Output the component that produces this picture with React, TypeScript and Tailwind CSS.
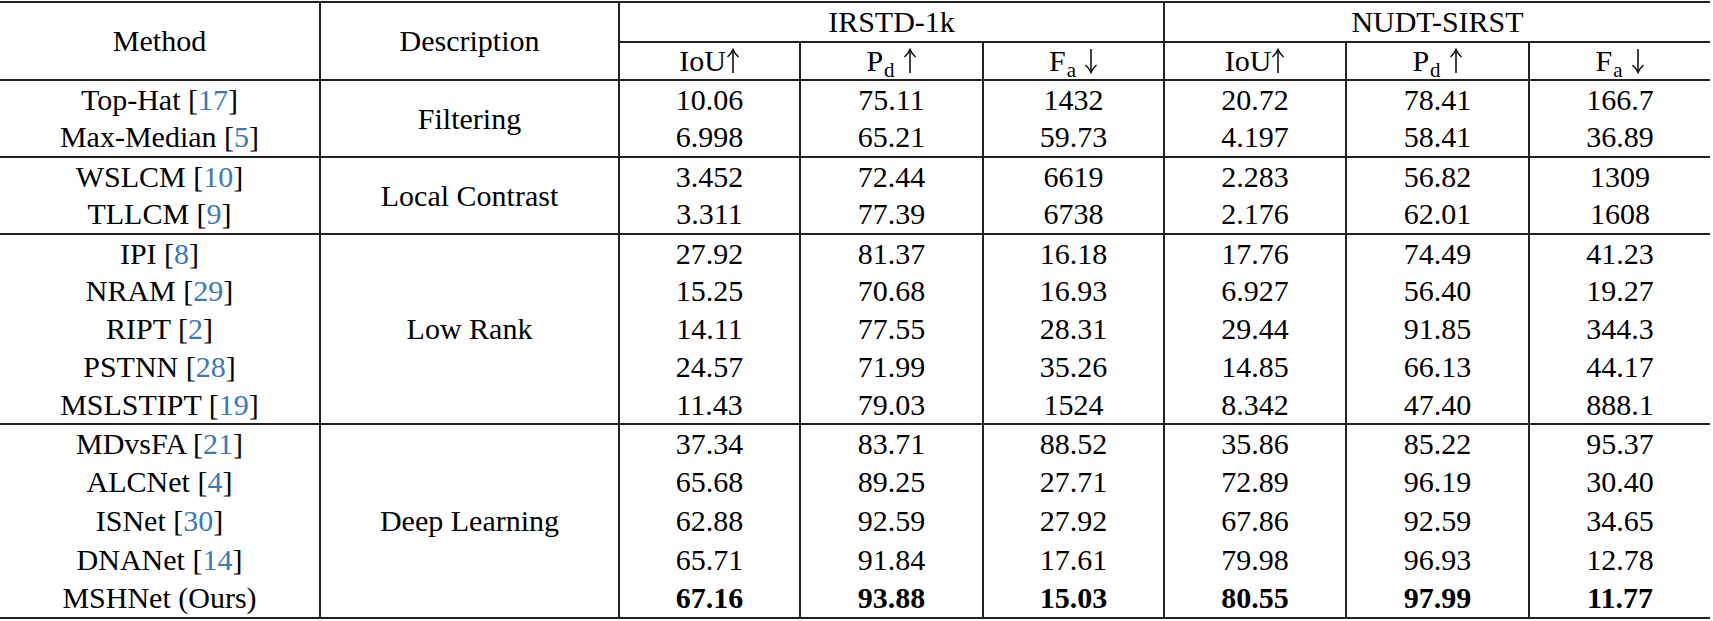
import React from "react";

type Row = {
  method: string;
  refNo?: string;
  irstd: string[];
  nudt: string[];
  bold?: boolean;
};

type Group = {
  desc: string;
  rows: Row[];
  h: string;
};

const groups: Group[] = [
  {
    desc: "Filtering",
    h: "h-[38.5px]",
    rows: [
      { method: "Top-Hat", refNo: "17", irstd: ["10.06", "75.11", "1432"], nudt: ["20.72", "78.41", "166.7"] },
      { method: "Max-Median", refNo: "5", irstd: ["6.998", "65.21", "59.73"], nudt: ["4.197", "58.41", "36.89"] },
    ],
  },
  {
    desc: "Local Contrast",
    h: "h-[38.5px]",
    rows: [
      { method: "WSLCM", refNo: "10", irstd: ["3.452", "72.44", "6619"], nudt: ["2.283", "56.82", "1309"] },
      { method: "TLLCM", refNo: "9", irstd: ["3.311", "77.39", "6738"], nudt: ["2.176", "62.01", "1608"] },
    ],
  },
  {
    desc: "Low Rank",
    h: "h-[38px]",
    rows: [
      { method: "IPI", refNo: "8", irstd: ["27.92", "81.37", "16.18"], nudt: ["17.76", "74.49", "41.23"] },
      { method: "NRAM", refNo: "29", irstd: ["15.25", "70.68", "16.93"], nudt: ["6.927", "56.40", "19.27"] },
      { method: "RIPT", refNo: "2", irstd: ["14.11", "77.55", "28.31"], nudt: ["29.44", "91.85", "344.3"] },
      { method: "PSTNN", refNo: "28", irstd: ["24.57", "71.99", "35.26"], nudt: ["14.85", "66.13", "44.17"] },
      { method: "MSLSTIPT", refNo: "19", irstd: ["11.43", "79.03", "1524"], nudt: ["8.342", "47.40", "888.1"] },
    ],
  },
  {
    desc: "Deep Learning",
    h: "h-[38.8px]",
    rows: [
      { method: "MDvsFA", refNo: "21", irstd: ["37.34", "83.71", "88.52"], nudt: ["35.86", "85.22", "95.37"] },
      { method: "ALCNet", refNo: "4", irstd: ["65.68", "89.25", "27.71"], nudt: ["72.89", "96.19", "30.40"] },
      { method: "ISNet", refNo: "30", irstd: ["62.88", "92.59", "27.92"], nudt: ["67.86", "92.59", "34.65"] },
      { method: "DNANet", refNo: "14", irstd: ["65.71", "91.84", "17.61"], nudt: ["79.98", "96.93", "12.78"] },
      { method: "MSHNet (Ours)", irstd: ["67.16", "93.88", "15.03"], nudt: ["80.55", "97.99", "11.77"], bold: true },
    ],
  },
];

const line = "border-[#222]";

// thin tall arrow like the TeX \uparrow / \downarrow
function Arrow({ down }: { down?: boolean }) {
  return (
    <svg width="14" height="26" viewBox="0 0 14 26" className="inline-block align-[-3px]" fill="none" stroke="#111" strokeWidth="1.6">
      {down ? (
        <>
          <path d="M7 1 V24" />
          <path d="M1.5 17 Q5 20 7 24.5 Q9 20 12.5 17" />
        </>
      ) : (
        <>
          <path d="M7 25 V2" />
          <path d="M1.5 9 Q5 6 7 1.5 Q9 6 12.5 9" />
        </>
      )}
    </svg>
  );
}

function MetricHeads() {
  return (
    <>
      <th className={`border-l-2 border-b-2 ${line} font-normal`}>
        IoU<Arrow />
      </th>
      <th className={`border-l-2 border-b-2 ${line} font-normal`}>
        P<span className="text-[21px] relative top-[6px] ml-[1px]">d</span>
        <span className="ml-[8px]">
          <Arrow />
        </span>
      </th>
      <th className={`border-l-2 border-b-2 ${line} font-normal`}>
        F<span className="text-[21px] relative top-[6px] ml-[1px]">a</span>
        <span className="ml-[8px]">
          <Arrow down />
        </span>
      </th>
    </>
  );
}

export default function App() {
  const widths = [320, 299, 181, 183, 181, 182, 183, 181];

  return (
    <div className="w-[1713px] h-[621px] bg-white text-black pt-[1px]" style={{ fontFamily: '"Liberation Serif", "Times New Roman", serif' }}>
      <table className="w-[1710px] table-fixed border-collapse text-[30px] leading-none text-center">
        <colgroup>
          {widths.map((w, i) => (
            <col key={i} style={{ width: w }} />
          ))}
        </colgroup>
        <thead>
          <tr className="h-[40px]">
            <th rowSpan={2} className={`border-t-2 border-b-2 ${line} font-normal`}>
              Method
            </th>
            <th rowSpan={2} className={`border-t-2 border-b-2 border-l-2 ${line} font-normal`}>
              Description
            </th>
            <th colSpan={3} className={`border-t-2 border-b-2 border-l-2 ${line} font-normal`}>
              IRSTD-1k
            </th>
            <th colSpan={3} className={`border-t-2 border-b-2 border-l-2 ${line} font-normal`}>
              NUDT-SIRST
            </th>
          </tr>
          <tr className="h-[38px]">
            <MetricHeads />
            <MetricHeads />
          </tr>
        </thead>
        <tbody>
          {groups.map((g) =>
            g.rows.map((r, i) => {
              const last = i === g.rows.length - 1;
              const b = last ? `border-b-2 ${line}` : "";
              return (
                <tr key={r.method} className={g.h}>
                  <td className={b}>
                    {r.method}
                    {r.refNo && (
                      <>
                        {" "}[<span className="text-[#3b78b4]">{r.refNo}</span>]
                      </>
                    )}
                  </td>
                  {i === 0 && (
                    <td rowSpan={g.rows.length} className={`border-l-2 border-b-2 ${line}`}>
                      {g.desc}
                    </td>
                  )}
                  {[...r.irstd, ...r.nudt].map((v, j) => (
                    <td key={j} className={`border-l-2 ${line} ${b} ${r.bold ? "font-bold" : ""}`}>
                      {v}
                    </td>
                  ))}
                </tr>
              );
            })
          )}
        </tbody>
      </table>
    </div>
  );
}
